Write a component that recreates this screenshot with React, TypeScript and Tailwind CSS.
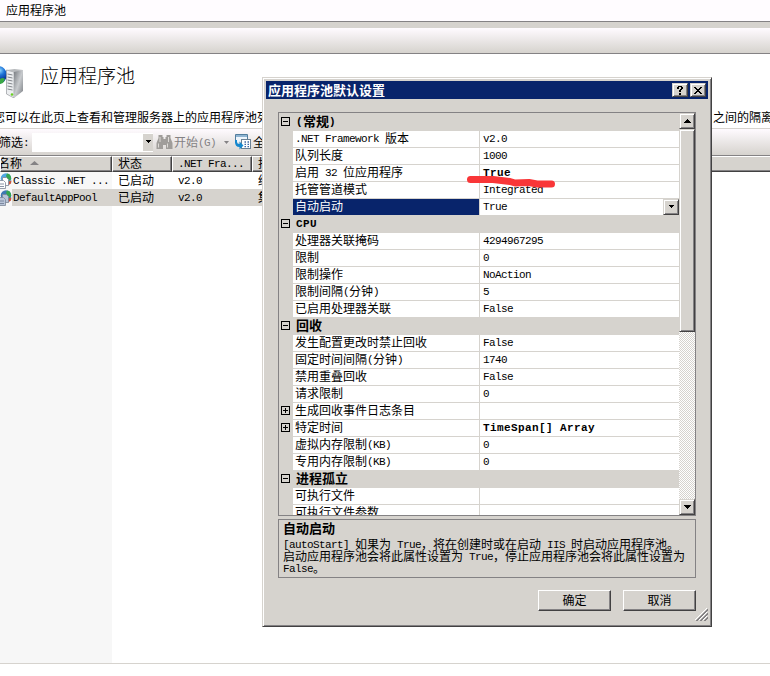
import React from "react";

const CJK = 'font-["Noto_Sans_CJK_SC",sans-serif]';

// Splits text in half-width and full-width runs so every half-width glyph takes exactly 6px (7px in bold).
function T({ s, className = "", bold }: { s: string; className?: string; bold?: boolean }) {
  const runs = s.match(/[\x20-\x7e]+|[^\x20-\x7e]+/g) || [];
  return (
    <span className={"whitespace-pre " + (bold ? "font-bold " : "") + className}>
      {runs.map((r, i) =>
        /^[\x20-\x7e]/.test(r) ? (
          <span
            key={i}
            className={'font-["Liberation_Mono",monospace] text-[11px] leading-[0] align-[1px] ' + (bold ? "tracking-[0.4px]" : "tracking-[-0.6px]")}
          >
            {r}
          </span>
        ) : (
          <span key={i} className={bold ? "text-[13px] leading-[0]" : "leading-[0]"}>{r}</span>
        )
      )}
    </span>
  );
}

type Row = { label: string; value?: string; head?: boolean; box?: "+" | "-"; bold?: boolean; selected?: boolean };

const rows: Row[] = [
  { label: "(常规)", head: true, box: "-" },
  { label: ".NET Framework 版本", value: "v2.0" },
  { label: "队列长度", value: "1000" },
  { label: "启用 32 位应用程序", value: "True", bold: true },
  { label: "托管管道模式", value: "Integrated" },
  { label: "自动启动", value: "True", selected: true },
  { label: "CPU", head: true, box: "-" },
  { label: "处理器关联掩码", value: "4294967295" },
  { label: "限制", value: "0" },
  { label: "限制操作", value: "NoAction" },
  { label: "限制间隔(分钟)", value: "5" },
  { label: "已启用处理器关联", value: "False" },
  { label: "回收", head: true, box: "-" },
  { label: "发生配置更改时禁止回收", value: "False" },
  { label: "固定时间间隔(分钟)", value: "1740" },
  { label: "禁用重叠回收", value: "False" },
  { label: "请求限制", value: "0" },
  { label: "生成回收事件日志条目", value: "", box: "+" },
  { label: "特定时间", value: "TimeSpan[] Array", box: "+", bold: true },
  { label: "虚拟内存限制(KB)", value: "0" },
  { label: "专用内存限制(KB)", value: "0" },
  { label: "进程孤立", head: true, box: "-" },
  { label: "可执行文件", value: "" },
  { label: "可执行文件参数", value: "" },
];

const raised = "border border-t-[#d6d3ce] border-l-[#d6d3ce] border-r-[#424142] border-b-[#424142] bg-[#d6d3ce] shadow-[inset_1px_1px_0_#fff,inset_-1px_-1px_0_#848284]";

function Arrow({ up, small }: { up?: boolean; small?: boolean }) {
  return (
    <svg width="7" height="4" viewBox="0 0 7 4" shapeRendering="crispEdges" className="shrink-0">
      <path d={up ? "M3 0h1v1H3zM2 1h3v1H2zM1 2h5v1H1zM0 3h7v1H0z" : small ? "M1 0h5v1H1zM2 1h3v1H2zM3 2h1v1H3z" : "M0 0h7v1H0zM1 1h5v1H1zM2 2h3v1H2zM3 3h1v1H3z"} fill="#000" />
    </svg>
  );
}

function Expander({ kind }: { kind: "+" | "-" }) {
  return (
    <svg width="9" height="9" viewBox="0 0 9 9" shapeRendering="crispEdges">
      <rect x=".5" y=".5" width="8" height="8" fill="none" stroke="#000" />
      <path d={kind === "+" ? "M2 4.5h5M4.5 2v5" : "M2 4.5h5"} stroke="#000" />
    </svg>
  );
}

function GridRow({ r }: { r: Row }) {
  return (
    <div className="flex h-[17px] shrink-0">
      <div className="flex w-[14px] shrink-0 items-start pl-[2px] pt-[3px]">{r.box && <Expander kind={r.box} />}</div>
      {r.head ? (
        <div className="flex-1 pl-[3px] leading-[13px]"><T s={r.label} bold /></div>
      ) : (
        <>
          <div className={"h-4 w-[186px] shrink-0 overflow-hidden pl-[2px] leading-[13px] " + (r.selected ? "bg-[#08246b] text-white" : "bg-white")}>
            <T s={r.label} />
          </div>
          <div className="ml-px flex h-4 flex-1 justify-between bg-white pl-[3px] leading-[13px]">
            <T s={r.value || ""} bold={r.bold} />
            {r.selected && (
              <div className={"flex h-4 w-4 items-center justify-center " + raised}><Arrow small /></div>
            )}
          </div>
        </>
      )}
    </div>
  );
}

function PoolIcon({ selected }: { selected?: boolean }) {
  return (
    <svg width="12" height="16" viewBox="0 0 12 16" className="shrink-0">
      <circle cx="6" cy="5.500" r="5.300" fill={selected ? "#3d78b4" : "#4fa8e4"} />
      <path d="M7 .5c3 0 4.500 3 4 6L8.500 8 6 3z" fill="#35a552" />
      <path d="M8.500 8.500l3-1-.5 3-3 2z" fill="#c8553f" />
      <path d="M2.500 4.500h4l2 2v6h-6z" fill={selected ? "#b8c4d8" : "#fff"} stroke="#7c8797" strokeWidth=".8" />
      <path d="M-.5 7.500h4l2 2v6h-6z" fill={selected ? "#b8c4d8" : "#fff"} stroke="#7c8797" strokeWidth=".8" />
      <path d="M0 11h4M0 13.500h4" stroke="#6c7a90" strokeWidth=".8" />
    </svg>
  );
}

function ServerIcon() {
  return (
    <svg width="24" height="33" viewBox="0 0 24 33">
      <defs>
        <linearGradient id="srv" x1="0" y1="0" x2="1" y2="1"><stop stopColor="#777b80" /><stop offset=".5" stopColor="#c8cbce" /><stop offset="1" stopColor="#777b80" /></linearGradient>
        <radialGradient id="glb" cx=".6" cy=".25"><stop stopColor="#8fd8ff" /><stop offset=".5" stopColor="#1d74d8" /><stop offset="1" stopColor="#0a3ca0" /></radialGradient>
      </defs>
      <circle cx="-2" cy="10" r="9" fill="url(#glb)" />
      <path d="M0 14q3-2 5 0l-2 4-3 1z" fill="#3aa845" />
      <path d="M6.500 5l7.500 2v26l-7.500-4z" fill="#eceef0" stroke="#969a9e" strokeWidth=".7" />
      <path d="M14 6l9-1v21l-9 7z" fill="url(#srv)" />
      <path d="M6.500 5l8-1 8.500 1-9 2z" fill="#b7babd" />
      <path d="M7.500 9l5 1M7.500 12l5 1M7.500 15l5 1M7.500 18l5 1M7.500 21l5 1M7.500 24l5 1" stroke="#82868c" />
      <circle cx="12" cy="29.500" r="1.300" fill="#6ad020" />
    </svg>
  );
}

function Binoculars() {
  return (
    <svg width="17" height="16" viewBox="0 0 17 16">
      <path d="M2.500 1h4v2h1v2h2V3h1V1h4v3l2 5v6H10v-4H7v4H.5V9l2-5z" fill="#a09d9a" />
      <path d="M4 3v5M2.500 9.500v4M12.500 3v5M11.500 9.500v4" stroke="#dddad6" />
    </svg>
  );
}

function ShowAllIcon() {
  return (
    <svg width="16" height="16" viewBox="0 0 16 16" className="shrink-0">
      <path d="M.5 9V.5h12V6" fill="#eef5fc" stroke="#527d9d" />
      <path d="M1 2h11" stroke="#8fb4d2" strokeWidth="2" />
      <rect x="6.500" y="5.500" width="9" height="9" fill="#fff" stroke="#6b8195" />
      <path d="M9.500 8h1.500M12.500 8h1.500M9.500 10.300h1.500M12.500 10.300h1.500M9.500 12.600h1.500M12.500 12.600h1.500" stroke="#3d65a5" strokeWidth="1.300" />
      <path d="M0 6h2v2q0 2 2.500 2V7.500l4 4-4 4V13Q0 13 0 8z" fill="#1688cf" />
    </svg>
  );
}

function HeadCell({ children, className }: { children: React.ReactNode; className: string }) {
  return (
    <div className={"flex h-4 shrink-0 items-center overflow-hidden bg-[#d6d3ce] border-t border-t-white border-l border-l-white border-r border-r-[#424142] border-b border-b-[#424142] pb-[2px] leading-[12px] shadow-[inset_-1px_-1px_0_#848284] " + className}>
      {children}
    </div>
  );
}

function DialogButton({ text }: { text: string }) {
  return (
    <div className="flex h-[21px] w-[73px] items-center justify-center border border-t-white border-l-white border-r-[#424142] border-b-[#424142] bg-[#d6d3ce] pb-px shadow-[inset_-1px_-1px_0_#848284]">
      <T s={text} />
    </div>
  );
}

function Dialog() {
  return (
    <div className="absolute left-[262px] top-[77px] flex h-[550px] w-[450px] flex-col border border-t-[#d6d3ce] border-l-[#d6d3ce] border-r-[#424142] border-b-[#424142] bg-[#d6d3ce] p-[3px] shadow-[inset_1px_1px_0_#fff,inset_-1px_-1px_0_#848284]">
      <div className="flex h-[18px] shrink-0 items-center justify-between bg-[#08246b] pl-[2px] pr-[2px] text-white">
        <span className="text-[13px] font-bold leading-[18px]">应用程序池默认设置</span>
        <div className="flex gap-[2px]">
          <div className={"flex h-[14px] w-4 items-center justify-center " + raised}>
            <svg width="6" height="9" viewBox="0 0 6 9" shapeRendering="crispEdges"><path d="M1 0h4v1H1zM0 1h2v2H0zM4 1h2v2H4zM3 3h2v1H3zM2 4h2v2H2zM2 7h2v2H2z" fill="#000" /></svg>
          </div>
          <div className={"flex h-[14px] w-4 items-center justify-center " + raised}>
            <svg width="8" height="7" viewBox="0 0 8 7" shapeRendering="crispEdges"><path d="M0 0h2v1H0zM6 0h2v1H6zM1 1h2v1H1zM5 1h2v1H5zM2 2h4v1H2zM3 3h2v1H3zM2 4h4v1H2zM1 5h2v1H1zM5 5h2v1H5zM0 6h2v1H0zM6 6h2v1H6z" fill="#000" /></svg>
          </div>
        </div>
      </div>
      <div className="ml-3 mt-[13px] flex h-[404px] w-[418px] shrink-0 border border-[#848284]">
        <div className="flex h-full w-[400px] flex-col overflow-hidden pt-px">
          {rows.map((r) => <GridRow key={r.label} r={r} />)}
        </div>
        <div className="flex w-4 flex-col bg-[repeating-conic-gradient(#fff_0_25%,#d6d3ce_0_50%)] bg-[length:2px_2px]">
          <div className={"flex h-4 items-center justify-center " + raised}><Arrow up /></div>
          <div className={"h-[203px] " + raised} />
          <div className={"mt-auto flex h-4 items-center justify-center " + raised}><Arrow /></div>
        </div>
      </div>
      <div className="ml-3 mt-[3px] flex h-[59px] w-[418px] shrink-0 flex-col border border-[#848284] pl-1">
        <div className="h-[18px] text-[13px] font-bold leading-[16px]">自动启动</div>
        <div className="flex flex-col leading-[12px]">
          <T s="[autoStart] 如果为 True，将在创建时或在启动 IIS 时启动应用程序池。" />
          <T s="启动应用程序池会将此属性设置为 True，停止应用程序池会将此属性设置为" />
          <T s="False。" />
        </div>
      </div>
      <div className="mr-[12px] mt-[12px] flex justify-end gap-3">
        <DialogButton text="确定" />
        <DialogButton text="取消" />
      </div>
      <svg className="ml-auto mt-[-3px] shrink-0" width="13" height="13" viewBox="0 0 13 13">
        <path d="M0 12L12 0M4 12l8-8M8 12l4-4" stroke="#fff" />
        <path d="M1 13L13 1M2 13L13 2M5 13l8-8M6 13l7-7M9 13l4-4M10 13l3-3" stroke="#848284" />
      </svg>
      <svg className="absolute left-[202px] top-[96px]" width="92" height="16" viewBox="0 0 92 16">
        <path d="M5.500 5.500L28 5.500 45 7.500 50 9 64 8.500 72 10 86.500 10" fill="none" stroke="#f93638" strokeWidth="7" strokeLinecap="round" strokeLinejoin="round" />
      </svg>
    </div>
  );
}

export default function App() {
  return (
    <div className={"relative flex h-[676px] w-[770px] flex-col overflow-hidden bg-white text-[12px] text-black " + CJK}>
      <div className="h-[22px] shrink-0 border-b border-[#848284] bg-[#fffcff] pl-[6px] leading-[19px]">应用程序池</div>
      <div className="h-[6px] shrink-0 bg-[#d6d3ce]" />
      <div className="h-[26px] shrink-0 border-b border-[#848284] bg-linear-to-b from-[#fffbff] to-[#d6d3ce]" />
      <div className="flex h-[50px] shrink-0 pt-[11px]">
        <ServerIcon />
        <div className="ml-4 text-[19px] font-light leading-[20px]">应用程序池</div>
      </div>
      <div className="flex h-[25px] shrink-0 justify-between border-b border-[#d6d3ce] leading-[26px]">
        <span className="-ml-[7px] whitespace-nowrap">您可以在此页上查看和管理服务器上的应用程序池列</span>
        <span className="-mr-[3px] whitespace-nowrap">之间的隔离</span>
      </div>
      <div className="flex h-[27px] shrink-0 items-center border-b border-[#848284] bg-linear-to-b from-[#fffbff] to-[#d6d3ce]">
        <T s="筛选:" className="-ml-[1px] w-[33px]" />
        <div className="flex h-[19px] w-[121px] justify-end bg-white">
          <div className="flex h-[17px] w-[10px] items-center justify-center self-center bg-[#d6d3ce]"><Arrow small /></div>
        </div>
        <div className="ml-[3px] flex items-center text-[#848284]"><Binoculars /><T s="开始(G)" className="ml-px" /></div>
        <svg className="ml-[8px]" width="5" height="3" viewBox="0 0 5 3"><path d="M0 0h5L2.500 3z" fill="#848284" /></svg>
        <div className="ml-[6px] flex items-center gap-[2px] whitespace-nowrap"><ShowAllIcon />全部</div>
      </div>
      <div className="flex h-4 shrink-0 bg-[#d6d3ce]">
        <HeadCell className="w-[112px]">
          <span className="-ml-[3px]">名称</span>
          <svg className="ml-[8px]" width="9" height="4" viewBox="0 0 9 4"><path d="M4.500 0L9 4H0z" fill="#848284" /></svg>
        </HeadCell>
        <HeadCell className="w-[60px] pl-[5px]">状态</HeadCell>
        <HeadCell className="w-[80px] pl-[5px]"><T s=".NET Fra..." /></HeadCell>
        <HeadCell className="w-[520px] pl-[5px]">托管管道模式</HeadCell>
      </div>
      <div className="flex h-[492px] w-full shrink-0 flex-col border-b border-[#d6d3ce] bg-[linear-gradient(to_right,#f7f7f7_112px,#fff_112px)]">
        <div className="flex h-[17px] w-[600px] items-center leading-[16px]">
          <PoolIcon />
          <div className="flex h-[17px] flex-1 items-center pb-[2px]">
            <T s="Classic .NET ..." className="ml-[1px] w-[105px]" />
            <span className="w-[60px]">已启动</span>
            <T s="v2.0" className="w-[80px]" />
            <span>经典</span>
          </div>
        </div>
        <div className="flex h-[17px] w-[600px] items-center leading-[16px]">
          <PoolIcon selected />
          <div className="flex h-[17px] flex-1 items-center bg-[#d6d3ce] pb-[2px]">
            <T s="DefaultAppPool" className="ml-[1px] w-[105px]" />
            <span className="w-[60px]">已启动</span>
            <T s="v2.0" className="w-[80px]" />
            <span>集成</span>
          </div>
        </div>
      </div>
      <Dialog />
    </div>
  );
}
